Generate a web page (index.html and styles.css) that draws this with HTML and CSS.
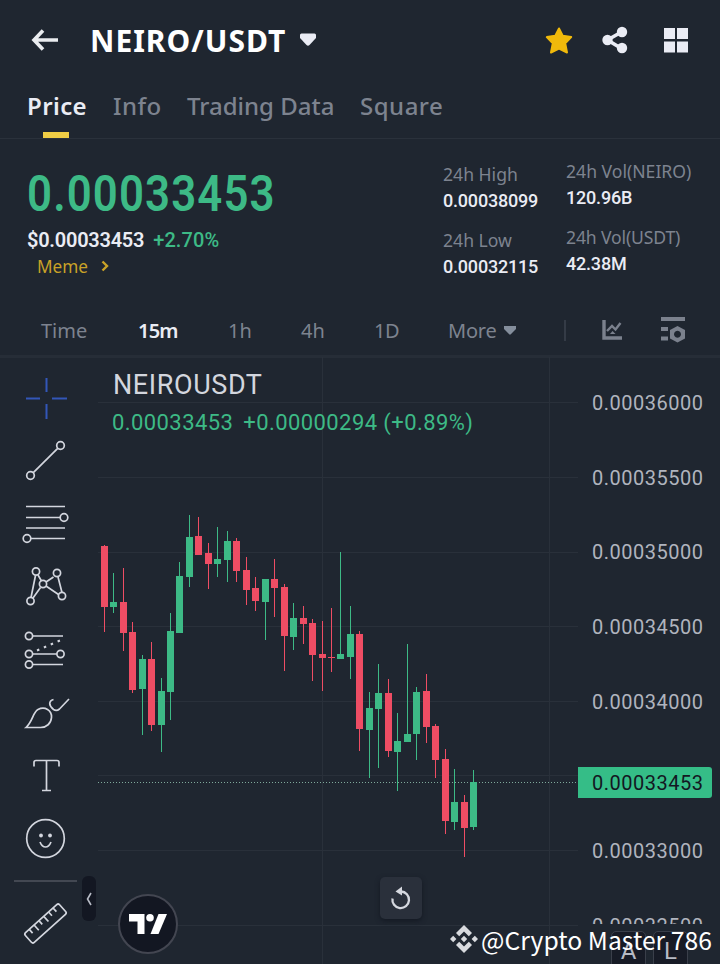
FILE: index.html
```html
<!DOCTYPE html>
<html lang="en">
<head>
<meta charset="utf-8">
<title>NEIRO/USDT</title>
<link rel="stylesheet" href="styles.css">
</head>
<body>
<main class="app">
  <header class="header">
    <svg class="back" width="28" height="22" viewBox="0 0 28 22"><path d="M12 1.500 3 11l9 9.500M3.500 11H27" fill="none" stroke="#eaecef" stroke-width="3.600"/></svg>
    <h1 class="pair"><span class="pair-name">NEIRO/USDT</span></h1>
    <svg class="caret" width="18" height="14" viewBox="0 0 18 14"><path d="M1 2q0-1.500 1.500-1.500h13q1.500 0 1.500 1.500v3L10.500 12q-1.500 1.300-3 0L1 5z" fill="#eaecf4"/></svg>
    <div class="actions">
      <svg width="28" height="28" viewBox="0 0 28 28"><path d="m14 2.500 3.700 7.200 8.500 1.400-6 6.200 1.800 9.200-8-3.800-8 3.800 1.800-9.200-6-6.200 8.500-1.400z" fill="#f0b90b" stroke="#f0b90b" stroke-width="2" stroke-linejoin="round"/></svg>
      <svg class="share" width="28" height="28" viewBox="0 0 28 28"><path d="M20.500 6 6.500 14l14 8.500" fill="none" stroke="#eaecf4" stroke-width="3.600"/><g fill="#eaecf4"><circle cx="6.500" cy="14" r="5.200"/><circle cx="21" cy="6" r="5.200"/><circle cx="21" cy="22" r="5.200"/></g></svg>
      <svg class="tiles" width="24" height="25" viewBox="0 0 24 25" fill="#eaecf4"><path d="M0 0h11v11H0zM13 0h11v11H13zM0 13.500h11v11H0zM13 13.500h11v11H13z"/></svg>
    </div>
  </header>

  <nav class="tabs">
    <a class="tab tab-active">Price</a>
    <a class="tab tab-info">Info</a>
    <a class="tab tab-data">Trading Data</a>
    <a class="tab tab-square">Square</a>
  </nav>

  <section class="summary">
    <div class="quote">
      <div class="last"><span class="last-text">0.00033453</span></div>
      <div class="sub"><span class="fiat">$0.00033453</span><span class="change">+2.70%</span></div>
      <div class="tag"><span>Meme</span><svg width="8" height="12" viewBox="0 0 8 12"><path d="m1.500 1.500 4.500 4.500-4.500 4.500" fill="none" stroke="#c9a227" stroke-width="2.400"/></svg></div>
    </div>
    <dl class="stats stats-range">
      <dt>24h High</dt><dd>0.00038099</dd>
      <dt>24h Low</dt><dd>0.00032115</dd>
    </dl>
    <dl class="stats stats-volume">
      <dt>24h Vol(NEIRO)</dt><dd>120.96B</dd>
      <dt class="vol-quote">24h Vol(USDT)</dt><dd>42.38M</dd>
    </dl>
  </section>

  <nav class="intervals">
    <span class="i-time">Time</span>
    <span class="i-15 selected">15m</span>
    <span class="i-1h">1h</span>
    <span class="i-4h">4h</span>
    <span class="i-1d">1D</span>
    <span class="i-more">More</span>
    <svg class="more-caret" width="12" height="9" viewBox="0 0 12 9"><path d="M0 0h12v3L6.800 8.300q-.8.700-1.600 0L0 3z" fill="#848e9c"/></svg>
    <i class="divider"></i>
    <svg class="i-chart" width="20" height="20" viewBox="0 0 20 20" fill="none" stroke="#7b818d"><path d="M2 0v18h18" stroke-width="3.400"/><path d="m5 11 5-5 3.500 3.500L18.500 3" stroke-width="2.400"/><path d="m8 14 2.500-3 3 3z" fill="#7b818d" stroke="none"/></svg>
    <svg class="i-settings" width="26" height="26" viewBox="0 0 26 26" fill="#7b818d"><path d="M1 0h24v4H1zM1 10h7v4H1zM1 19.500h7v4H1z"/><path fill-rule="evenodd" d="m17.500 9 7.500 4v8.500l-7.500 4-7.500-4V13zm0 4.800a3.500 3.500 0 1 0 .01 0z"/></svg>
  </nav>

  <section class="chart">
    <aside class="tools">
      <svg width="98" height="607" viewBox="0 357 98 607" fill="none" stroke="#d3d6de" stroke-width="1.700">
        <path d="M46.500 378v14M46.500 404v15M26 398.500h14M52 398.500h15" stroke="#3356b8" stroke-width="2"/>
        <circle cx="30.500" cy="475.500" r="3.800"/><circle cx="60.500" cy="445.500" r="3.800"/><path d="m33.300 472.700 24.400-24.400"/>
        <path d="M26 506.500h39M26 517.500h34M26 528h39M31 538.500h34"/><circle cx="64" cy="517.500" r="3.800"/><circle cx="27" cy="538.500" r="3.800"/>
        <path d="m35.500 575.500-4.500 22M38 575l3.500 6M46 582l7.500-5M58 577l4 15.500M46 586l12.500 8.500M40.500 587.500 33 598"/><circle cx="36" cy="571.500" r="3.600"/><circle cx="57" cy="573" r="3.600"/><circle cx="43" cy="584" r="3.600"/><circle cx="30.500" cy="601" r="3.600"/><circle cx="62" cy="596" r="3.600"/>
        <circle cx="29" cy="636" r="3.600"/><circle cx="29" cy="654" r="3.600"/><circle cx="60.500" cy="654" r="3.600"/><circle cx="29" cy="664.500" r="3.600"/><path d="M33 636h30M33 654h24M33 664.500h30"/><path d="m37 650.500 24-10.500" stroke-width="2" stroke-dasharray="2.500 5"/>
        <path d="M26 727.500C33 721 33 712 38 709.500c7-3.500 14 1 13.500 8-.5 6-5 10-11 10zM53.500 699.500c-5 1.500-5 6 0 10q3 2 6-.5L69 699"/>
        <path d="M34 766.500v-4q0-2 2-2h21q2 0 2 2v4M46.500 761v29.500M42 790.500h9"/>
        <circle cx="45.500" cy="838.500" r="18.800"/><path d="M40 842q2 5 5.500 5t5.500-5"/><g fill="#d3d6de" stroke="none"><circle cx="41" cy="835.500" r="1.900"/><circle cx="50" cy="835.500" r="1.900"/></g>
        <path d="M14 881h63" stroke="#434852" stroke-width="2"/>
        <g transform="rotate(-42 45.500 923.500)"><rect x="22.500" y="917" width="46" height="13" rx="2"/><path d="M29.500 917v5M36 917v7M42.500 917v5M49 917v7M55.500 917v5M61.500 917v5"/></g>
      </svg>
    </aside>

    <svg class="plot" width="480" height="607" viewBox="98 357 480 607">
      <path class="grid" d="M98 402.500h480M98 477.500h480M98 552.500h480M98 626.500h480M98 701.500h480M98 775.500h480M98 850.500h480M98 925.500h480M322.500 357v607M549.500 357v607"/>
      <path class="last-line" d="M98 782.500h480"/>
      <path class="wick up" d="M113.500 573v40M142.500 655v80M161.500 678v74M170.500 613v107M179.500 562v71M189.500 515v72M217.500 527v50M227.500 531v51M265.500 579v61M293.500 603v47M340.500 552v107M350.500 606v73M369.500 692v86M378.500 664v104M397.500 713v78M407.500 644v98M416.500 687v73M454.500 769v61M473.500 770v60"/>
      <path class="wick down" d="M104.500 545v87M123.500 568v83M132.500 622v71M151.500 642v89M198.500 517v38M208.500 543v46M236.500 538v44M246.500 557v48M255.500 577v34M274.500 559v58M284.500 584v87M303.500 606v38M312.500 619v62M322.500 621v70M331.500 608v64M359.500 631v120M388.500 679v78M426.500 674v69M435.500 724v54M445.500 749v85M464.500 795v62"/>
      <path class="body up" d="M113.500 602v5M142.500 659v30M161.500 691v34M170.500 631v61M179.500 576v57M189.500 537v40M217.500 559v5M227.500 541v19M265.500 579v23M293.500 618v19M340.500 654v5M350.500 634v23M369.500 708v22M378.500 693v16M397.500 741v11M407.500 734v8M416.500 692v42M454.500 802v20M473.500 782v45"/>
      <path class="body down" d="M104.500 546v61M123.500 602v31M132.500 632v58M151.500 659v66M198.500 536v19M208.500 553v11M236.500 541v30M246.500 570v20M255.500 588v13M274.500 579v9M284.500 587v49M303.500 618v6M312.500 623v32M322.500 654v4M331.500 657v1M359.500 634v95M388.500 693v58M426.500 691v36M435.500 726v34M445.500 759v62M464.500 802v26"/>
    </svg>

    <div class="scale">
      <span>0.00036000</span><span>0.00035500</span><span>0.00035000</span><span>0.00034500</span><span>0.00034000</span><span class="hidden-step"></span><span>0.00033000</span><span class="cut">0.00032500</span>
      <b class="last-label">0.00033453</b>
      <i class="mode mode-a">A</i><i class="mode mode-l">L</i>
    </div>

    <div class="legend">
      <div class="symbol">NEIROUSDT</div>
      <div class="values"><span>0.00033453</span><span class="delta">+0.00000294 (+0.89%)</span></div>
    </div>
    <div class="collapse"><svg width="7" height="14" viewBox="0 0 7 14"><path d="M5 1 1.500 7 5 13" fill="none" stroke="#b8bcc6" stroke-width="1.600"/></svg></div>
    <div class="tv"><svg width="38" height="20" viewBox="0 0 38 20" fill="#fff"><path d="M0 0h15.500v20H8.500V7.500H0z"/><circle cx="21" cy="3.800" r="3.800"/><path d="M29.500 0H38l-8.500 20h-8z"/></svg></div>
    <div class="reset"><svg width="22" height="24" viewBox="0 0 22 24"><path d="M2.500 12.500A8.300 8.300 0 1 0 11 5.500H8" fill="none" stroke="#d5d8df" stroke-width="2.300"/><path d="m5.500 5.500 6.500-5v9z" fill="#d5d8df"/></svg></div>
    <div class="author">
      <svg width="28" height="28" viewBox="0 0 28 28" fill="#d8dade"><path d="m14 0 8 8-3.200 3.200L14 6.400l-4.800 4.800L6 8zM14 28l-8-8 3.200-3.200L14 21.600l4.800-4.800L22 20zM3.200 10.800 6.400 14l-3.200 3.200L0 14zM24.800 10.800 28 14l-3.200 3.200L21.600 14zM14 10.800l3.200 3.200-3.200 3.200-3.200-3.200z"/></svg>
      <span>@Crypto Master 786</span>
    </div>
  </section>
</main>
</body>
</html>
```
FILE: styles.css
```css
* { box-sizing: border-box; }
body { margin: 0; background: #1f2630; color: #eaecf4; font-family: "Noto Sans", sans-serif; }
svg { display: block; flex: none; }
h1, dl, dd { margin: 0; }
.app { width: 720px; height: 964px; overflow: hidden; display: flex; flex-direction: column; }
.header { height: 80px; display: flex; align-items: center; padding-left: 31px; }
.pair { width: 197px; margin-left: 31px; font-size: 30px; line-height: 40px; font-weight: 700; color: #fff; white-space: nowrap; padding-top: 2px; }
.pair-name { letter-spacing: 1px; }
.caret { margin-left: 12px; }
.actions { display: flex; align-items: center; margin-left: auto; padding-right: 32px; }
.share { margin-left: 28px; }
.tiles { margin-left: 35px; }

.tabs { height: 59px; border-bottom: 1px solid #2a313b; display: flex; padding-left: 27px; font-size: 24px; line-height: 52px; font-weight: 500; color: #7d838f; white-space: nowrap; }
.tab { position: relative; letter-spacing: .5px; }
.tab-active { width: 86px; color: #eaecf4; font-weight: 600; letter-spacing: .4px; }
.tab-active::after { content: ""; position: absolute; left: 16px; bottom: 0; width: 26px; height: 6px; background: #f0cd45; }
.tab-info { width: 74px; }
.tab-data { width: 173px; letter-spacing: 0; }

.summary { height: 166px; display: flex; padding-left: 27px; }
.quote { width: 416px; padding-top: 24px; font-family: Roboto, sans-serif; }
.last { height: 62px; line-height: 62px; font-size: 50px; font-weight: 600; color: #3dba86; }
.last-text { display: inline-block; transform: scaleX(.875); transform-origin: left; letter-spacing: 1.300px; }
.sub { display: flex; gap: 9px; height: 30px; line-height: 30px; font-size: 20px; letter-spacing: -.25px; }
.fiat { font-weight: 600; }
.change { color: #3dba86; font-weight: 500; letter-spacing: .1px; }
.tag { display: flex; align-items: center; gap: 13px; margin-left: 10px; height: 22px; font-size: 17.200px; color: #c9a227; font-family: "Noto Sans", sans-serif; }
.stats { white-space: nowrap; }
.stats-range { width: 123px; padding-top: 22px; }
.stats-volume { padding-top: 19px; }
.stats dt { height: 27px; font-size: 17.600px; line-height: 26px; color: #7d838f; }
.stats .vol-quote { letter-spacing: -.15px; }
.stats dd { height: 26px; margin-bottom: 13px; font: 500 18px/26px Roboto, sans-serif; letter-spacing: -.2px; }

.intervals { height: 53px; margin-bottom: -1px; border-bottom: 3px solid #262d37; display: flex; align-items: center; padding-left: 41px; font-size: 20px; color: #7d838f; }
.i-time { width: 97px; }
.i-15 { width: 90px; }
.i-1h { width: 73px; }
.i-4h { width: 73px; }
.i-1d { width: 74px; letter-spacing: -.4px; }
.i-more { width: 56px; letter-spacing: -.2px; }
.selected { font-weight: 600; color: #eaecf4; letter-spacing: -.8px; }
.divider { width: 2px; height: 21px; margin-left: 48px; background: #343b46; }
.i-chart { margin-left: 36px; }
.i-settings { margin-left: 38px; }

.chart { position: relative; height: 607px; display: grid; grid-template-columns: 98px 480px 142px; }
.grid { fill: none; stroke: #29303a; }
.last-line { stroke: #7fa99b; stroke-dasharray: 1 2; }
.wick, .body { fill: none; }
.body { stroke-width: 7; }
.up { stroke: #3dba86; }
.down { stroke: #ee4d64; }
.scale { position: relative; height: 607px; padding: 9px 0 0 14px; font: 20px/74.700px Roboto, sans-serif; color: #b0b4be; }
.scale span { display: block; height: 74.700px; letter-spacing: .5px; }
.scale .cut { height: 35px; overflow: hidden; }
.last-label { position: absolute; left: 0; top: 410px; width: 134px; height: 31px; padding-left: 14px; border-radius: 0 3px 3px 0; background: #35bd87; color: #131722; font: 20px/32px Roboto, sans-serif; letter-spacing: .5px; }
.mode { position: absolute; top: 574px; width: 35px; height: 40px; border: 1px solid #3a3f4a; border-radius: 5px; background: #171b26; text-align: center; font: 24px/38px Roboto, sans-serif; color: #b6bac4; }
.mode-a { left: 33px; }
.mode-l { left: 75px; }
.legend { position: absolute; left: 113px; top: 11px; font-family: Roboto, sans-serif; white-space: nowrap; }
.symbol { font-size: 27px; line-height: 34px; letter-spacing: .6px; color: #d3d6de; }
.values { display: flex; gap: 10px; margin: 5px 0 0 -1px; font-size: 22px; line-height: 32px; letter-spacing: .42px; color: #3dba86; }
.collapse { position: absolute; left: 82px; top: 519px; width: 14px; height: 45px; border-radius: 6px; background: #131722; display: grid; place-items: center; }
.tv { position: absolute; left: 118px; top: 537px; width: 60px; height: 60px; border: 2px solid #434651; border-radius: 50%; background: #131722; display: grid; place-items: center; }
.reset { position: absolute; left: 380px; top: 520px; width: 42px; height: 42px; border-radius: 5px; background: #2a303b; box-shadow: 0 2px 5px #141923; display: grid; place-items: center; }
.author { position: absolute; left: 450px; top: 565px; display: flex; align-items: center; gap: 3px; font: 24.700px/34px "Noto Sans CJK SC", sans-serif; letter-spacing: .04px; color: #fff; white-space: nowrap; }
```
